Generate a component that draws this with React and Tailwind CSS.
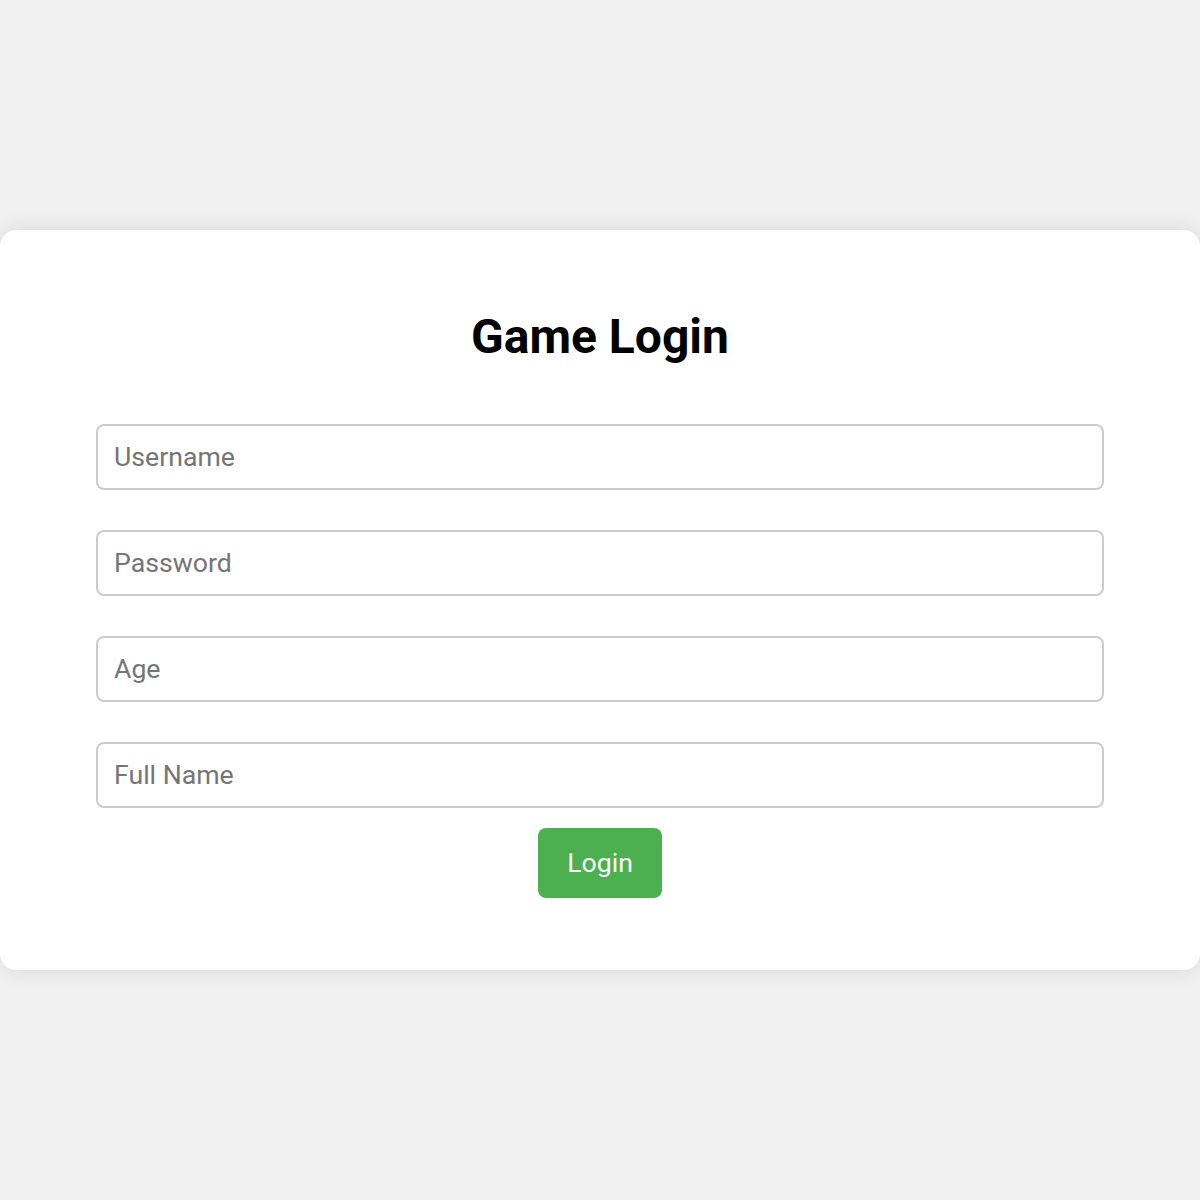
export default function App() {
  const fields = ["Username", "Password", "Age", "Full Name"];
  return (
    <div
      className="min-h-[1200px] w-[1200px] bg-[#f0f0f0] flex flex-col justify-center"
      style={{ fontFamily: "Roboto, 'Noto Sans', sans-serif" }}
    >
      <div className="bg-white rounded-[16px] shadow-[0_0_20px_rgba(0,0,0,0.1)] px-[96px] pt-[79px] pb-[72px] flex flex-col">
        <h1 className="text-[48px] leading-[56px] font-bold text-black text-center mb-[59px]">
          Game Login
        </h1>
        <div className="flex flex-col gap-[40px]">
          {fields.map((f) => (
            <input
              key={f}
              placeholder={f}
              className="h-[66px] w-full border-2 border-[#cccccc] rounded-[8px] px-[16px] text-[26.67px] text-black placeholder:text-[#757575] outline-none"
            />
          ))}
        </div>
        <div className="flex justify-center mt-[20px]">
          <button className="h-[70px] w-[124px] bg-[#4caf50] text-white text-[26.67px] rounded-[8px]">
            Login
          </button>
        </div>
      </div>
    </div>
  );
}
